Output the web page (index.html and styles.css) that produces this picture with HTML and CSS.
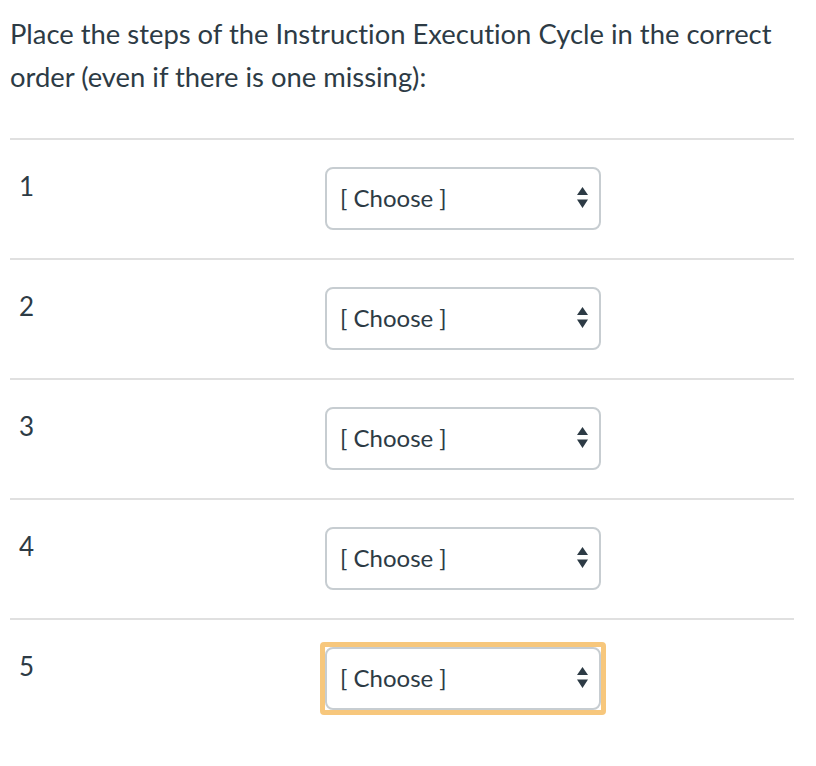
FILE: index.html
```html
<!DOCTYPE html>
<html lang="en">
<head>
<meta charset="utf-8">
<title>Quiz question</title>
<link rel="stylesheet" href="styles.css">
</head>
<body>
<div class="question">
  <p class="prompt">Place the steps of the Instruction Execution Cycle in the correct order (even if there is one missing):</p>
  <div class="rows">
    <div class="row">
      <div class="num">1</div>
      <div class="field"><div class="select"><span>[ Choose ]</span><svg class="arrows" width="11" height="21" viewBox="0 0 11 21"><path d="M5.5 0 L11 8 L0 8 Z M0 12.5 L11 12.5 L5.5 21 Z" fill="#2d3b45"/></svg></div></div>
    </div>
    <div class="row">
      <div class="num">2</div>
      <div class="field"><div class="select"><span>[ Choose ]</span><svg class="arrows" width="11" height="21" viewBox="0 0 11 21"><path d="M5.5 0 L11 8 L0 8 Z M0 12.5 L11 12.5 L5.5 21 Z" fill="#2d3b45"/></svg></div></div>
    </div>
    <div class="row">
      <div class="num">3</div>
      <div class="field"><div class="select"><span>[ Choose ]</span><svg class="arrows" width="11" height="21" viewBox="0 0 11 21"><path d="M5.5 0 L11 8 L0 8 Z M0 12.5 L11 12.5 L5.5 21 Z" fill="#2d3b45"/></svg></div></div>
    </div>
    <div class="row">
      <div class="num">4</div>
      <div class="field"><div class="select"><span>[ Choose ]</span><svg class="arrows" width="11" height="21" viewBox="0 0 11 21"><path d="M5.5 0 L11 8 L0 8 Z M0 12.5 L11 12.5 L5.5 21 Z" fill="#2d3b45"/></svg></div></div>
    </div>
    <div class="row">
      <div class="num">5</div>
      <div class="field"><div class="focus-ring"><div class="select"><span>[ Choose ]</span><svg class="arrows" width="11" height="21" viewBox="0 0 11 21"><path d="M5.5 0 L11 8 L0 8 Z M0 12.5 L11 12.5 L5.5 21 Z" fill="#2d3b45"/></svg></div></div></div>
    </div>
  </div>
</div>
</body>
</html>
```
FILE: styles.css
```css
html, body {
  margin: 0;
  padding: 0;
  background: #ffffff;
}

body {
  font-family: Lato, "Liberation Sans", sans-serif;
  color: #2d3b45;
  font-variant-ligatures: none;
}

.question {
  padding: 12px 22px 0 10px;
}

.prompt {
  margin: 0;
  font-size: 27.4px;
  line-height: 43px;
}

.rows {
  margin-top: 40px;
}

.row {
  display: flex;
  align-items: flex-start;
  border-top: 2px solid #e0e0e0;
  padding: 27px 0 28px 0;
}

.num {
  width: 306px;
  padding-left: 9px;
  font-size: 26px;
  line-height: 38px;
}

.field {
  display: flex;
}

.select {
  box-sizing: border-box;
  width: 276px;
  height: 63px;
  border: 2px solid #c7cdd1;
  border-radius: 8px;
  background: #ffffff;
  display: flex;
  align-items: center;
  justify-content: space-between;
  padding: 0 11px 2px 13px;
  font-size: 24px;
}

.arrows {
  display: block;
}

.focus-ring {
  margin: -5px;
  border: 5px solid #f7c77c;
  border-radius: 4px;
}
```
